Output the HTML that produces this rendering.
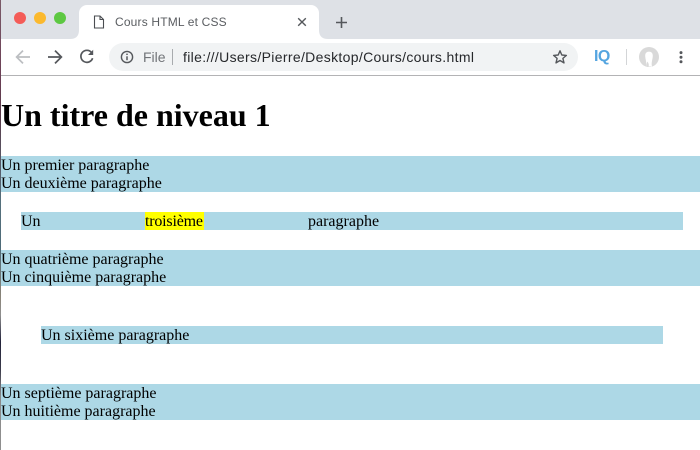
<!DOCTYPE html>
<html lang="fr">
<head>
<meta charset="utf-8">
<title>Cours HTML et CSS</title>
<style>
html,body{margin:0;padding:0;background:#fff;}
body{position:relative;width:700px;height:450px;overflow:hidden;}
.abs{position:absolute;}
.serif{font-family:"Liberation Serif",serif;color:#000;white-space:nowrap;}
.p{position:absolute;height:18px;line-height:20px;font-size:16px;font-family:"Liberation Serif",serif;color:#000;white-space:nowrap;background:#add8e6;}
.sans{font-family:"Liberation Sans",sans-serif;white-space:nowrap;}
</style>
</head>
<body>
<!-- browser chrome -->
<div class="abs" style="left:0;top:0;width:700px;height:39px;background:#dee1e6;"></div>
<div class="abs" style="left:0;top:39px;width:700px;height:36px;background:#fff;"></div>
<div class="abs" style="left:0;top:75px;width:700px;height:1px;background:#b3b3b5;"></div>

<!-- traffic lights -->
<div class="abs" style="left:14px;top:12px;width:12px;height:12px;border-radius:50%;background:#f45c58;"></div>
<div class="abs" style="left:34px;top:12px;width:12px;height:12px;border-radius:50%;background:#fbb92e;"></div>
<div class="abs" style="left:54px;top:12px;width:12px;height:12px;border-radius:50%;background:#5dc842;"></div>

<!-- tab -->
<div class="abs" style="left:79px;top:5px;width:240px;height:34px;background:#fff;border-radius:8px 8px 0 0;"></div>
<svg class="abs" style="left:70px;top:30px;" width="260" height="9" viewBox="0 0 260 9">
  <path d="M0 9 Q9 9 9 0 L9 9 Z" fill="#fff"/>
  <path d="M249 0 Q249 9 258 9 L249 9 Z" fill="#fff"/>
</svg>
<svg class="abs" style="left:93px;top:15px;" width="12" height="14" viewBox="0 0 12 14">
  <path d="M1.5 1 H7 L10.5 4.5 V13 H1.5 Z M7 1 V4.5 H10.5" fill="none" stroke="#4a4d51" stroke-width="1.1"/>
</svg>
<div class="abs sans" style="left:115px;top:14px;font-size:12px;line-height:16px;color:#5a5d61;letter-spacing:.17px;">Cours HTML et CSS</div>
<svg class="abs" style="left:297px;top:17px;" width="10" height="10" viewBox="0 0 10 10">
  <path d="M1.2 1.2 L8.8 8.8 M8.8 1.2 L1.2 8.8" stroke="#55585c" stroke-width="1.4" fill="none"/>
</svg>
<svg class="abs" style="left:335px;top:16px;" width="13" height="13" viewBox="0 0 13 13">
  <path d="M6.5 1 V12 M1 6.5 H12" stroke="#55585c" stroke-width="1.6" fill="none"/>
</svg>

<!-- nav icons -->
<svg class="abs" style="left:15px;top:49px;" width="16" height="16" viewBox="0 0 16 16">
  <path d="M15 8 H2 M8 1.6 L1.6 8 L8 14.4" stroke="#bcbec1" stroke-width="1.7" fill="none"/>
</svg>
<svg class="abs" style="left:47px;top:49px;" width="16" height="16" viewBox="0 0 16 16">
  <path d="M1 8 H14 M8 1.6 L14.4 8 L8 14.4" stroke="#55585c" stroke-width="1.7" fill="none"/>
</svg>
<svg class="abs" style="left:79px;top:49px;" width="16" height="15" viewBox="0 0 16 15">
  <path d="M12.6 3.6 A6 6 0 1 0 13.6 9.2" stroke="#55585c" stroke-width="1.7" fill="none"/>
  <path d="M14.2 0.8 V6 H9 Z" fill="#55585c"/>
</svg>

<!-- omnibox -->
<div class="abs" style="left:109px;top:43px;width:469px;height:28px;border-radius:14px;background:#f1f3f4;"></div>
<svg class="abs" style="left:120px;top:50px;" width="14" height="14" viewBox="0 0 14 14">
  <circle cx="7" cy="7" r="5.6" fill="none" stroke="#55585c" stroke-width="1.4"/>
  <path d="M7 6.3 V10.2" stroke="#55585c" stroke-width="1.5"/>
  <path d="M7 3.6 V5" stroke="#55585c" stroke-width="1.5"/>
</svg>
<div class="abs sans" style="left:143px;top:49px;font-size:14px;line-height:16px;color:#717478;">File</div>
<div class="abs" style="left:172px;top:49px;width:1px;height:16px;background:#a8abae;"></div>
<div class="abs sans" style="left:183px;top:49px;font-size:14px;line-height:16px;color:#26282b;letter-spacing:.335px;">file:///Users/Pierre/Desktop/Cours/cours.html</div>
<svg class="abs" style="left:552px;top:49px;" width="16" height="16" viewBox="0 0 16 16">
  <path d="M8 1.8 L9.8 6 L14.4 6.4 L10.9 9.4 L12 13.9 L8 11.5 L4 13.9 L5.1 9.4 L1.6 6.4 L6.2 6 Z" fill="none" stroke="#55585c" stroke-width="1.4" stroke-linejoin="round"/>
</svg>

<!-- extensions -->
<div class="abs sans" style="left:594px;top:48px;font-size:16px;line-height:18px;font-weight:bold;color:#55a5e0;letter-spacing:-.6px;">IQ</div>
<div class="abs" style="left:626px;top:49px;width:1px;height:16px;background:#d3d5d7;"></div>
<svg class="abs" style="left:639px;top:47px;" width="20" height="20" viewBox="0 0 20 20">
  <circle cx="10" cy="10" r="10" fill="#d9d9d9"/>
  <path d="M7 19.5 C8 15.5 6.2 12 6.2 8.6 C6.2 6 7.8 4.6 10 4.6 C12.2 4.6 13.8 6 13.8 8.6 C13.8 12 12 15.5 13 19.5 Z" fill="#fff"/>
  <path d="M8.2 14.5 C9.5 16 10.2 17.5 9.5 19.8 L7 19.5 Z" fill="#d9d9d9"/>
</svg>
<svg class="abs" style="left:679px;top:50px;" width="5" height="15" viewBox="0 0 5 15">
  <circle cx="2" cy="2.6" r="1.5" fill="#55585c"/>
  <circle cx="2" cy="7.2" r="1.5" fill="#55585c"/>
  <circle cx="2" cy="11.8" r="1.5" fill="#55585c"/>
</svg>

<!-- page content -->
<div class="abs serif" style="left:1px;top:97px;font-size:32px;line-height:37px;font-weight:bold;">Un titre de niveau 1</div>

<div class="p" style="left:1px;top:156px;width:699px;">Un premier paragraphe</div>
<div class="p" style="left:1px;top:174px;width:699px;">Un deuxième paragraphe</div>

<div class="p" style="left:21px;top:212px;width:662px;">
  <span class="abs" style="left:0;top:0;height:18px;">Un</span>
  <span class="abs" style="left:124px;top:0;height:18px;width:59px;background:#ff0;letter-spacing:-.2px;overflow:hidden;">troisième</span>
  <span class="abs" style="left:287px;top:0;height:18px;">paragraphe</span>
</div>

<div class="p" style="left:1px;top:250px;width:699px;">Un quatrième paragraphe</div>
<div class="p" style="left:1px;top:268px;width:699px;">Un cinquième paragraphe</div>

<div class="p" style="left:41px;top:326px;width:622px;">Un sixième paragraphe</div>

<div class="p" style="left:1px;top:384px;width:699px;">Un septième paragraphe</div>
<div class="p" style="left:1px;top:402px;width:699px;">Un huitième paragraphe</div>

<!-- desktop sliver on the left edge -->
<div class="abs" style="left:0;top:0;width:1px;height:450px;background:linear-gradient(to bottom,#7a5a68 0,#6b3f55 17%,#5a3a4a 25%,#55707c 45%,#4d6a78 55%,#8a8478 66%,#8f8f8f 70%,#22223a 76%,#3a3a4a 82%,#8a8a8a 88%,#8f8f8f 100%);"></div>
</body>
</html>
